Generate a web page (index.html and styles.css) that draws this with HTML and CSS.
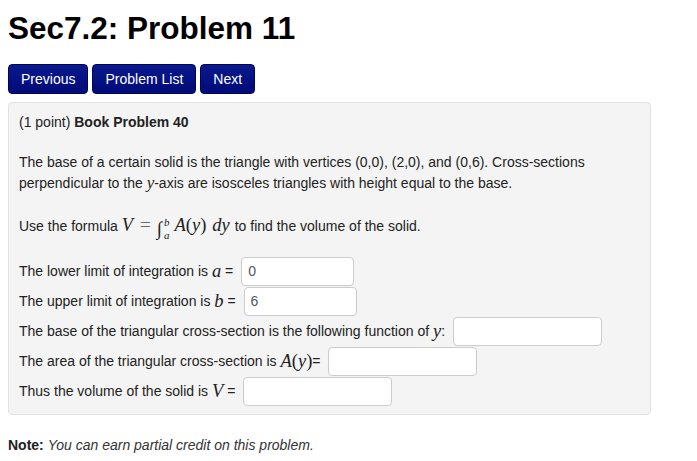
FILE: index.html
```html
<!DOCTYPE html>
<html>
<head>
<meta charset="utf-8">
<link rel="stylesheet" href="styles.css">
</head>
<body>
<h1 class="title">Sec7.2: Problem 11</h1>
<div class="nav">
  <button class="btn">Previous</button>
  <button class="btn">Problem List</button>
  <button class="btn">Next</button>
</div>
<div class="problem">
  <p class="head">(1 point) <b>Book Problem 40</b></p>
  <p class="para">The base of a certain solid is the triangle with vertices (0,0), (2,0), and (0,6). Cross-sections<br>perpendicular to the <span class="m">y</span>-axis are isosceles triangles with height equal to the base.</p>
  <p class="para formula">Use the formula <span class="m big">V</span><span class="eq">=</span><span class="int">∫<span class="lims"><span class="sup m">b</span><span class="sub m">a</span></span></span><span class="m big">A</span><span class="up big">(</span><span class="m big">y</span><span class="up big">)</span><span class="m big dy">dy</span> to find the volume of the solid.</p>
  <div class="answers">
    <div class="row">The lower limit of integration is <span class="m big">a</span> = <input class="ans short" value="0"></div>
    <div class="row">The upper limit of integration is <span class="m big">b</span> = <input class="ans short" value="6"></div>
    <div class="row">The base of the triangular cross-section is the following function of <span class="m big">y</span>: <input class="ans"></div>
    <div class="row">The area of the triangular cross-section is <span class="m big">A</span><span class="up big">(</span><span class="m big">y</span><span class="up big">)</span>= <input class="ans"></div>
    <div class="row">Thus the volume of the solid is <span class="m big">V</span> = <input class="ans"></div>
  </div>
</div>
<p class="note"><b>Note:</b> <i>You can earn partial credit on this problem.</i></p>
</body>
</html>
```

FILE: styles.css
```css
body {
  margin: 8px;
  font-family: "Liberation Sans", Arial, sans-serif;
  font-size: 14px;
  color: #222;
}
.title {
  font-size: 31.5px;
  font-weight: bold;
  color: #000;
  margin: 2px 0 0 0;
  line-height: 36px;
}
.nav {
  display: flex;
  gap: 4px;
  margin-top: 18px;
}
.btn {
  font-family: "Liberation Sans", Arial, sans-serif;
  font-size: 14px;
  color: #fff;
  background: linear-gradient(#0a1a8c, #000a78);
  border: 1px solid #00065a;
  border-radius: 4px;
  height: 30px;
  padding: 0 12px;
}
.problem {
  margin-top: 8px;
  width: 621px;
  background: #f4f4f4;
  border: 1px solid #e2e2e2;
  border-radius: 4px;
  padding: 9px 10px 8px 10px;
}
.head { margin: 0 0 19px 0; line-height: 21px; }
.para { margin: 0 0 21px 0; line-height: 21px; }
.formula { margin-bottom: 20px; line-height: 21px; height: 21px; }
.m {
  font-family: "Liberation Serif", "DejaVu Serif", serif;
  font-style: italic;
  font-size: 17px;
  line-height: 1;
}
.big { font-size: 18.5px; }
.up { font-family: "Liberation Serif", serif; line-height: 1; }
.eq { font-family: "Liberation Serif", serif; font-size: 19px; color: #666; margin: 0 6px 0 7px; line-height: 1; }
.dy { margin-left: 6px; margin-right: 1px; }
.int {
  font-family: "Liberation Serif", serif;
  font-size: 19px;
  font-style: italic;
  display: inline-flex;
  align-items: center;
  margin-right: 5px;
  line-height: 1;
  vertical-align: -4px;
}
.lims {
  display: inline-flex;
  flex-direction: column;
  margin-left: 2px;
}
.lims .m {
  font-size: 11px;
  line-height: 13px;
}
.answers { display: flex; flex-direction: column; }
.row {
  display: flex;
  align-items: center;
  height: 30px;
  white-space: pre;
}
.ans {
  box-sizing: border-box;
  width: 149px;
  height: 29px;
  margin-left: 4px;
  border: 1px solid #ccc;
  border-radius: 4px;
  background: #fff;
  font-family: "Liberation Sans", Arial, sans-serif;
  font-size: 14px;
  color: #555;
  padding: 0 6px;
}
.short { width: 113px; }
.note { margin-top: 22px; }
.note i { color: #333; }
```
